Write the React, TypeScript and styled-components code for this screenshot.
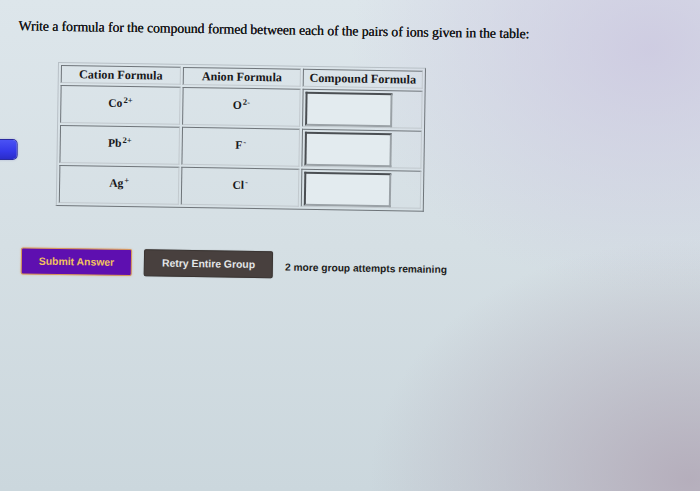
import React from 'react';
import styled, { createGlobalStyle } from 'styled-components';

const GlobalStyle = createGlobalStyle`
  html, body {
    margin: 0;
    padding: 0;
    width: 700px;
    height: 491px;
    overflow: hidden;
  }
  body {
    background:
      radial-gradient(ellipse 300px 240px at 650px 50px, rgba(204, 200, 224, 0.85), rgba(204, 200, 224, 0) 100%),
      radial-gradient(ellipse 320px 240px at 690px 480px, rgba(180, 172, 186, 0.95), rgba(180, 172, 186, 0) 100%),
      linear-gradient(180deg, #dde6eb 0%, #d5dfe4 50%, #cbd7dd 100%);
    font-family: 'Liberation Serif', 'Times New Roman', serif;
    color: #161618;
  }
`;

const Page = styled.div`
  position: relative;
  width: 700px;
  height: 491px;
  padding: 18px 0 0 19px;
  box-sizing: border-box;
  transform: rotate(0.9deg);
  transform-origin: 0 0;
`;

const Title = styled.p`
  margin: 0;
  font-size: 13.8px;
  line-height: 16px;
  font-weight: 400;
  letter-spacing: -0.1px;
  text-shadow: 0 0 0.4px #111;
`;

const IonTable = styled.table`
  margin: 27px 0 0 40px;
  border-collapse: separate;
  border-spacing: 2px;
  border: 1px solid;
  border-color: #b8c0c6 #6e7479 #6e7479 #b8c0c6;
  font-family: 'Liberation Serif', 'Times New Roman', serif;
  font-weight: 700;
  font-size: 11.5px;
  color: #18181a;
`;

const HeadCell = styled.th<{ $width: number }>`
  width: ${p => p.$width}px;
  height: 16px;
  padding: 0;
  border: 1px solid;
  border-color: #6e7479 #c2c9ce #c2c9ce #6e7479;
  font-size: 12.2px;
  font-weight: 700;
  text-align: center;
  white-space: nowrap;
`;

const Cell = styled.td`
  height: 38px;
  padding: 0 0 4px;
  border: 1px solid;
  border-color: #6e7479 #c2c9ce #c2c9ce #6e7479;
  text-align: center;
  vertical-align: middle;
  box-sizing: border-box;
`;

const InputCell = styled(Cell)`
  padding: 2px 0 0 2px;
  text-align: left;
  vertical-align: top;
`;

const AnswerBox = styled.div`
  width: 83px;
  height: 30px;
  border: 2px solid;
  border-color: #4a4e52 #9aa1a6 #9aa1a6 #4a4e52;
  background: #e3ebef;
`;

const Sup = styled.sup`
  font-size: 8.5px;
  vertical-align: 4px;
  line-height: 0;
  margin-left: 1px;
`;

const SideTab = styled.div`
  position: absolute;
  left: -8px;
  top: 140px;
  width: 27px;
  height: 19px;
  border-radius: 4px;
  background: linear-gradient(180deg, #4a52f4 0%, #3438e8 60%, #2a2cc8 100%);
  box-shadow: 0 0 0 1px #2a2aa0, 0 0 3px rgba(40, 40, 160, 0.5);
  transform: rotate(-0.9deg);
`;

const Actions = styled.div`
  display: flex;
  align-items: center;
  gap: 12px;
  margin: 42px 0 0 6px;
`;

const ActionButton = styled.button<{ $variant: 'submit' | 'retry' }>`
  height: 27px;
  padding: 0 17px;
  border-radius: 2px;
  font-family: 'Liberation Sans', Arial, sans-serif;
  font-weight: 700;
  font-size: 10.4px;
  cursor: pointer;
  background: ${p => (p.$variant === 'submit' ? '#5e0fb0' : '#48403e')};
  color: ${p => (p.$variant === 'submit' ? '#f2c25e' : '#e4e6e8')};
  border: 1px solid ${p => (p.$variant === 'submit' ? '#d8985a' : '#3a3432')};
  box-shadow: ${p => (p.$variant === 'submit' ? '0 0 2px rgba(220,150,90,0.6)' : '0 0 1px rgba(0,0,0,0.4)')};
`;

const Remaining = styled.span`
  font-family: 'Liberation Sans', Arial, sans-serif;
  font-weight: 700;
  font-size: 10.2px;
  color: #1c1c20;
  padding-top: 4px;
`;

const rows = [
  { cation: 'Co', cCharge: '2+', anion: 'O', aCharge: '2-' },
  { cation: 'Pb', cCharge: '2+', anion: 'F', aCharge: '-' },
  { cation: 'Ag', cCharge: '+', anion: 'Cl', aCharge: '-' },
];

export default function App() {
  return (
    <>
      <GlobalStyle />
      <Page>
        <Title>Write a formula for the compound formed between each of the pairs of ions given in the table:</Title>
        <IonTable>
          <thead>
            <tr>
              <HeadCell $width={118}>Cation Formula</HeadCell>
              <HeadCell $width={116}>Anion Formula</HeadCell>
              <HeadCell $width={118}>Compound Formula</HeadCell>
            </tr>
          </thead>
          <tbody>
            {rows.map(r => (
              <tr key={r.cation}>
                <Cell>
                  {r.cation}
                  <Sup>{r.cCharge}</Sup>
                </Cell>
                <Cell>
                  {r.anion}
                  <Sup>{r.aCharge}</Sup>
                </Cell>
                <InputCell>
                  <AnswerBox />
                </InputCell>
              </tr>
            ))}
          </tbody>
        </IonTable>
        <Actions>
          <ActionButton $variant="submit">Submit Answer</ActionButton>
          <ActionButton $variant="retry">Retry Entire Group</ActionButton>
          <Remaining>2 more group attempts remaining</Remaining>
        </Actions>
        <SideTab />
      </Page>
    </>
  );
}
